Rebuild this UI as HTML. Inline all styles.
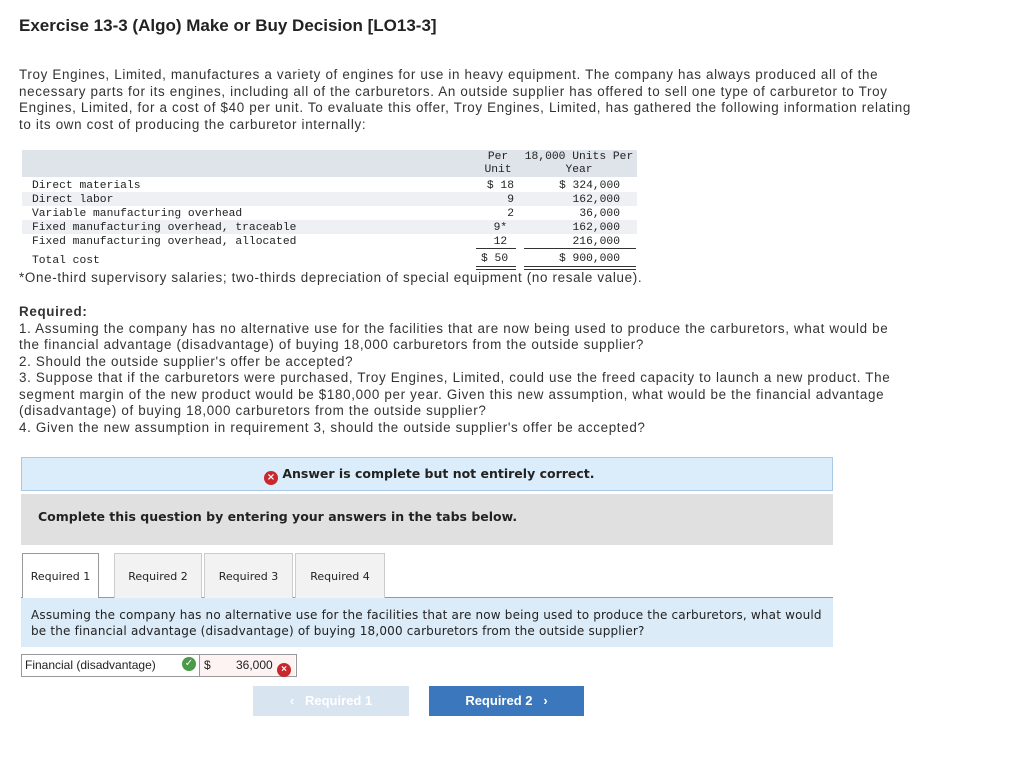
<!DOCTYPE html>
<html><head><style>
body{margin:0;background:#fff;font-family:"Liberation Sans",sans-serif;color:#222;width:1027px;height:774px;position:relative;overflow:hidden}
.a{position:absolute}
h1{position:absolute;left:19px;top:16px;margin:0;font-size:17px;font-weight:bold;color:#222}
.p{font-size:13.4px;line-height:16.5px;color:#333;white-space:nowrap;letter-spacing:0.67px}
.m{font-family:"Liberation Mono",monospace;font-size:11.3px;color:#222}
.tab{position:absolute;top:553px;height:45px;border:1px solid #ccc;border-bottom:none;background:#f2f2f2;font-family:"DejaVu Sans",sans-serif;font-size:11px;line-height:45px;text-align:center;color:#222}
.x{display:inline-block;width:14px;height:14px;border-radius:50%;background:#c8282d;color:#fff;font-size:10px;line-height:14px;text-align:center;font-weight:bold;vertical-align:-2px}
</style></head><body>
<h1>Exercise 13-3 (Algo) Make or Buy Decision [LO13-3]</h1>
<div class="a p" style="left:19px;top:67px">Troy Engines, Limited, manufactures a variety of engines for use in heavy equipment. The company has always produced all of the<br>necessary parts for its engines, including all of the carburetors. An outside supplier has offered to sell one type of carburetor to Troy<br>Engines, Limited, for a cost of $40 per unit. To evaluate this offer, Troy Engines, Limited, has gathered the following information relating<br>to its own cost of producing the carburetor internally:</div>

<div class="a" style="left:22px;top:150px;width:615px;height:27px;background:#dfe3ea"></div>
<div class="a m" style="left:478px;top:151px;width:40px;text-align:center;line-height:13px">Per<br>Unit</div>
<div class="a m" style="left:520px;top:151px;width:118px;text-align:center;line-height:13px">18,000 Units Per<br>Year</div>
<div class="a" style="left:22px;top:192px;width:615px;height:14px;background:#eef0f4"></div>
<div class="a" style="left:22px;top:220px;width:615px;height:14px;background:#eef0f4"></div>
<div class="a m" style="left:32px;top:179px;line-height:14px">Direct materials<br>Direct labor<br>Variable manufacturing overhead<br>Fixed manufacturing overhead, traceable<br>Fixed manufacturing overhead, allocated</div>
<div class="a m" style="left:470px;top:179px;width:44px;text-align:right;line-height:14px">$ 18<br>9<br>2<br>9*&nbsp;<br>12&nbsp;</div>
<div class="a m" style="left:530px;top:179px;width:90px;text-align:right;line-height:14px">$ 324,000<br>162,000<br>36,000<br>162,000<br>216,000</div>
<div class="a" style="left:476px;top:248px;width:40px;border-top:1px solid #333"></div>
<div class="a" style="left:524px;top:248px;width:112px;border-top:1px solid #333"></div>
<div class="a m" style="left:32px;top:255px">Total cost</div>
<div class="a m" style="left:481px;top:253px">$ 50</div>
<div class="a m" style="left:559px;top:253px">$ 900,000</div>
<div class="a" style="left:476px;top:266px;width:40px;height:2px;border-top:1px solid #333;border-bottom:1px solid #333"></div>
<div class="a" style="left:524px;top:266px;width:112px;height:2px;border-top:1px solid #333;border-bottom:1px solid #333"></div>
<div class="a p" style="left:19px;top:270px">*One-third supervisory salaries; two-thirds depreciation of special equipment (no resale value).</div>

<div class="a p" style="left:19px;top:304px"><b>Required:</b><br>1. Assuming the company has no alternative use for the facilities that are now being used to produce the carburetors, what would be<br>the financial advantage (disadvantage) of buying 18,000 carburetors from the outside supplier?<br>2. Should the outside supplier's offer be accepted?<br>3. Suppose that if the carburetors were purchased, Troy Engines, Limited, could use the freed capacity to launch a new product. The<br>segment margin of the new product would be $180,000 per year. Given this new assumption, what would be the financial advantage<br>(disadvantage) of buying 18,000 carburetors from the outside supplier?<br>4. Given the new assumption in requirement 3, should the outside supplier's offer be accepted?</div>

<div class="a" style="left:21px;top:457px;width:810px;height:32px;background:#dbecfa;border:1px solid #a8c9e6"></div>
<div class="a" style="left:264px;top:466px;font-family:'DejaVu Sans',sans-serif;font-size:12.5px;font-weight:bold;color:#222"><span class="x">×</span> Answer is complete but not entirely correct.</div>
<div class="a" style="left:21px;top:494px;width:812px;height:51px;background:#e0e0e0"></div>
<div class="a" style="left:38px;top:509px;font-family:'DejaVu Sans',sans-serif;font-size:12.5px;font-weight:bold;color:#222">Complete this question by entering your answers in the tabs below.</div>

<div class="a" style="left:21px;top:597px;width:812px;border-top:1px solid #999"></div>
<div class="tab" style="left:22px;width:75px;background:#fff;height:46px;border-color:#999">Required 1</div>
<div class="tab" style="left:114px;width:86px">Required 2</div>
<div class="tab" style="left:204px;width:87px">Required 3</div>
<div class="tab" style="left:295px;width:88px">Required 4</div>
<div class="a" style="left:21px;top:598px;width:812px;height:49px;background:#dbebf8"></div>
<div class="a" style="left:31px;top:607px;font-family:'DejaVu Sans',sans-serif;font-size:12px;line-height:16px;color:#222;white-space:nowrap;letter-spacing:0.18px">Assuming the company has no alternative use for the facilities that are now being used to produce the carburetors, what would<br>be the financial advantage (disadvantage) of buying 18,000 carburetors from the outside supplier?</div>

<div class="a" style="left:21px;top:654px;width:274px;height:21px;border:1px solid #999"></div>
<div class="a" style="left:199px;top:654px;width:1px;height:22px;background:#999"></div>
<div class="a" style="left:200px;top:655px;width:95px;height:21px;background:#fdf3f3"></div>
<div class="a" style="left:25px;top:658px;font-size:12px">Financial (disadvantage)</div>
<div class="a" style="left:182px;top:657px;width:14px;height:14px;border-radius:50%;background:#4a9a4a;color:#fff;font-size:10px;line-height:14px;text-align:center">✓</div>
<div class="a" style="left:204px;top:658px;font-size:12px">$</div>
<div class="a" style="left:236px;top:658px;font-size:12px">36,000</div>
<div class="a" style="left:277px;top:657px"><span class="x">×</span></div>

<div class="a" style="left:253px;top:686px;width:156px;height:30px;background:#d8e4f0;color:#fff;font-size:13px;font-weight:bold;line-height:30px;text-align:center">‹&nbsp;&nbsp; Required 1</div>
<div class="a" style="left:429px;top:686px;width:155px;height:30px;background:#3a77bd;color:#fff;font-size:13px;font-weight:bold;line-height:30px;text-align:center">Required 2 &nbsp; ›</div>
</body></html>
